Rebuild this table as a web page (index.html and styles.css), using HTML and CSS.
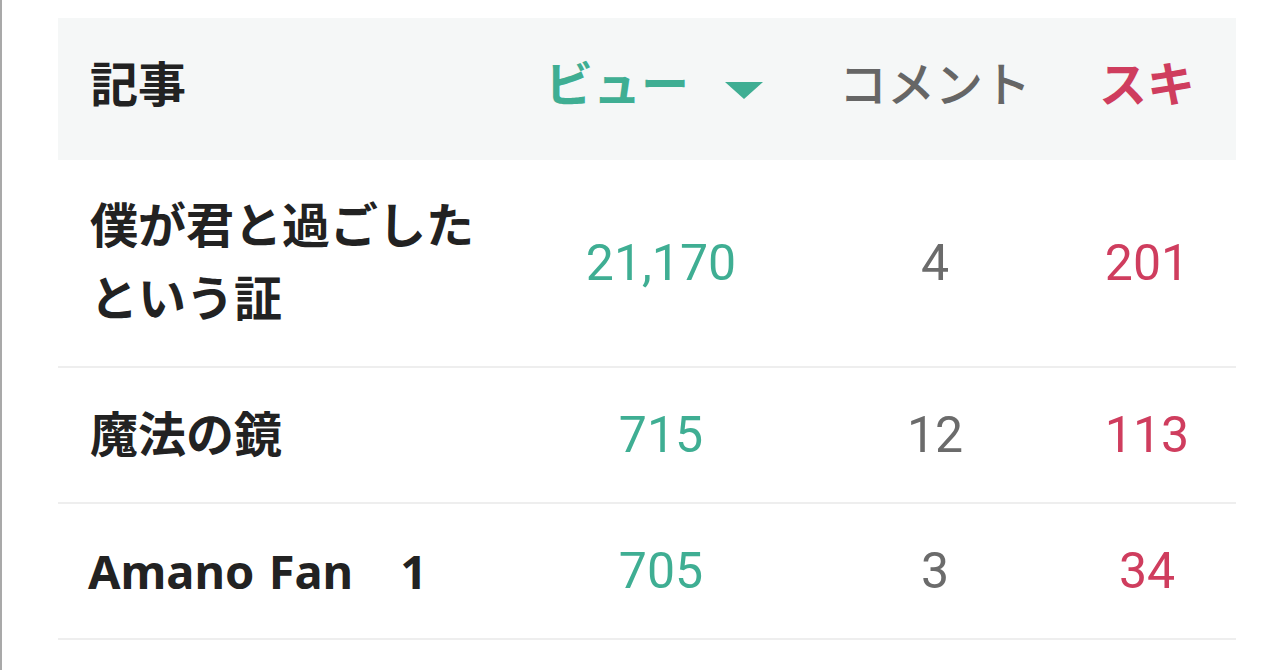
FILE: index.html
```html
<!DOCTYPE html>
<html lang="ja">
<head>
<meta charset="utf-8">
<link rel="stylesheet" href="styles.css">
</head>
<body>
<div class="page">
  <div class="table">
    <div class="row head">
      <div class="cell title">記事</div>
      <div class="cell num view">ビュー<span class="caret"></span></div>
      <div class="cell num comment">コメント</div>
      <div class="cell num like">スキ</div>
    </div>
    <div class="row tall">
      <div class="cell title"><span class="wrap">僕が君と過ごしたという証</span></div>
      <div class="cell num view">21,170</div>
      <div class="cell num comment">4</div>
      <div class="cell num like">201</div>
    </div>
    <div class="row">
      <div class="cell title">魔法の鏡</div>
      <div class="cell num view">715</div>
      <div class="cell num comment">12</div>
      <div class="cell num like">113</div>
    </div>
    <div class="row">
      <div class="cell title latin">Amano Fan　1</div>
      <div class="cell num view">705</div>
      <div class="cell num comment">3</div>
      <div class="cell num like">34</div>
    </div>
  </div>
</div>
</body>
</html>
```

FILE: styles.css
```css
html, body {
  margin: 0;
  padding: 0;
  background: #ffffff;
}
body {
  font-family: Roboto, "Noto Sans CJK JP", sans-serif;
  width: 1280px;
  height: 670px;
  overflow: hidden;
}
.page {
  height: 670px;
  border-left: 2px solid #a9a9a9;
  box-sizing: border-box;
  padding: 18px 0 0 56px;
}
.table {
  width: 1178px;
}
.row {
  display: grid;
  grid-template-columns: 470px 266px 282px 142px;
  align-items: center;
  border-bottom: 2px solid #eeeeee;
  height: 134px;
  box-sizing: content-box;
}
.row.head {
  background: #f5f7f7;
  border-bottom: none;
  height: 126px;
  padding-bottom: 16px;
}
.row.tall {
  height: 206px;
}
.cell.title {
  padding-left: 32px;
  font-family: Roboto, "Noto Sans CJK JP", sans-serif;
  font-weight: 700;
  font-size: 48px;
  line-height: 73px;
  color: #222222;
}
.cell.title.latin {
  font-family: "Noto Sans", "Noto Sans CJK JP", sans-serif;
  font-size: 47px;
  padding-left: 30px;
  word-spacing: 2px;
}
.wrap {
  display: block;
  width: 400px;
}
.head .cell.title {
  font-family: "Noto Sans CJK JP", sans-serif;
}
.num {
  text-align: center;
  font-family: Roboto, sans-serif;
  font-size: 50px;
  font-weight: 400;
}
.head .num {
  font-family: "Noto Sans CJK JP", sans-serif;
  font-size: 48px;
}
.view { color: #3fae93; }
.comment { color: #6b6b6b; }
.like { color: #cf3d5e; }
.head .view, .head .like { font-weight: 700; }
.head .comment { font-weight: 500; color: #666666; }
.head .view {
  padding-right: 14px;
}
.caret {
  display: inline-block;
  width: 0;
  height: 0;
  margin-left: 36px;
  border-left: 19px solid transparent;
  border-right: 19px solid transparent;
  border-top: 17px solid #3fae93;
  vertical-align: middle;
  position: relative;
  top: 2px;
}
```
